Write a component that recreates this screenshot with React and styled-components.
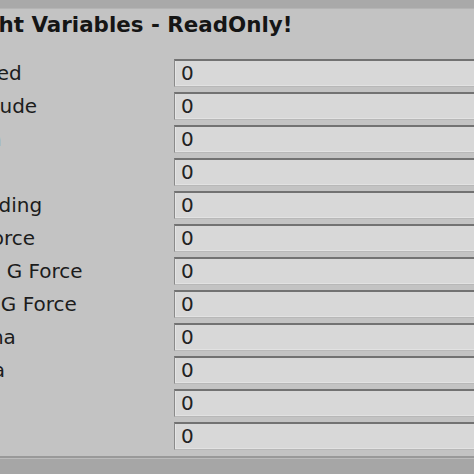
import React from "react";
import styled, { createGlobalStyle } from "styled-components";

const GlobalStyle = createGlobalStyle`
  html, body {
    margin: 0;
    padding: 0;
    background: #a6a6a6;
  }
`;

const Window = styled.div`
  width: 474px;
  height: 474px;
  overflow: hidden;
  display: flex;
  flex-direction: column;
  background: #a6a6a6;
  font-family: "DejaVu Sans", "Liberation Sans", sans-serif;
  color: #1c1c1c;
`;

const TopBar = styled.div`
  height: 8px;
  flex-shrink: 0;
  background: #a9a9a9;
  border-bottom: 1px solid #b4b4b4;
`;

const Panel = styled.div`
  background: #c3c3c3;
  padding: 3px 0 6px 0;
  border-bottom: 2px solid #999;
  box-shadow: 0 1px 0 #bcbcbc;
`;

const Inner = styled.div`
  margin-left: -41px;
  width: 600px;
`;

const Title = styled.h1`
  margin: 0 0 21px -5px;
  font-size: 21.4px;
  line-height: 26px;
  font-weight: bold;
  white-space: nowrap;
  color: #151515;
`;

const Rows = styled.div`
  display: grid;
  grid-template-columns: 215px 1fr;
  row-gap: 5px;
`;

const Label = styled.div`
  font-size: 20px;
  line-height: 28px;
  white-space: nowrap;
`;

const Field = styled.div`
  height: 25px;
  font-size: 20px;
  line-height: 25px;
  padding-left: 6px;
  background: #d8d8d8;
  border-top: 2px solid #727272;
  border-left: 1px solid #8a8a8a;
  border-bottom: 1px solid #b8b8b8;
  box-shadow: inset 1px 0 0 #e4e4e4, inset 0 -1px 0 #e2e2e2;
  color: #222;
`;

const variables = [
  "Speed",
  "Altitude",
  "Turn",
  "Roll",
  "Heading",
  "G Force",
  "Max G Force",
  "Min G Force",
  "Alpha",
  "Beta",
  "Lat",
  "Lon",
];

function App() {
  return (
    <>
      <GlobalStyle />
      <Window>
        <TopBar />
        <Panel>
          <Inner>
            <Title>Flight Variables - ReadOnly!</Title>
            <Rows>
              {variables.map((name) => (
                <React.Fragment key={name}>
                  <Label>{name}</Label>
                  <Field>0</Field>
                </React.Fragment>
              ))}
            </Rows>
          </Inner>
        </Panel>
      </Window>
    </>
  );
}

export default App;
